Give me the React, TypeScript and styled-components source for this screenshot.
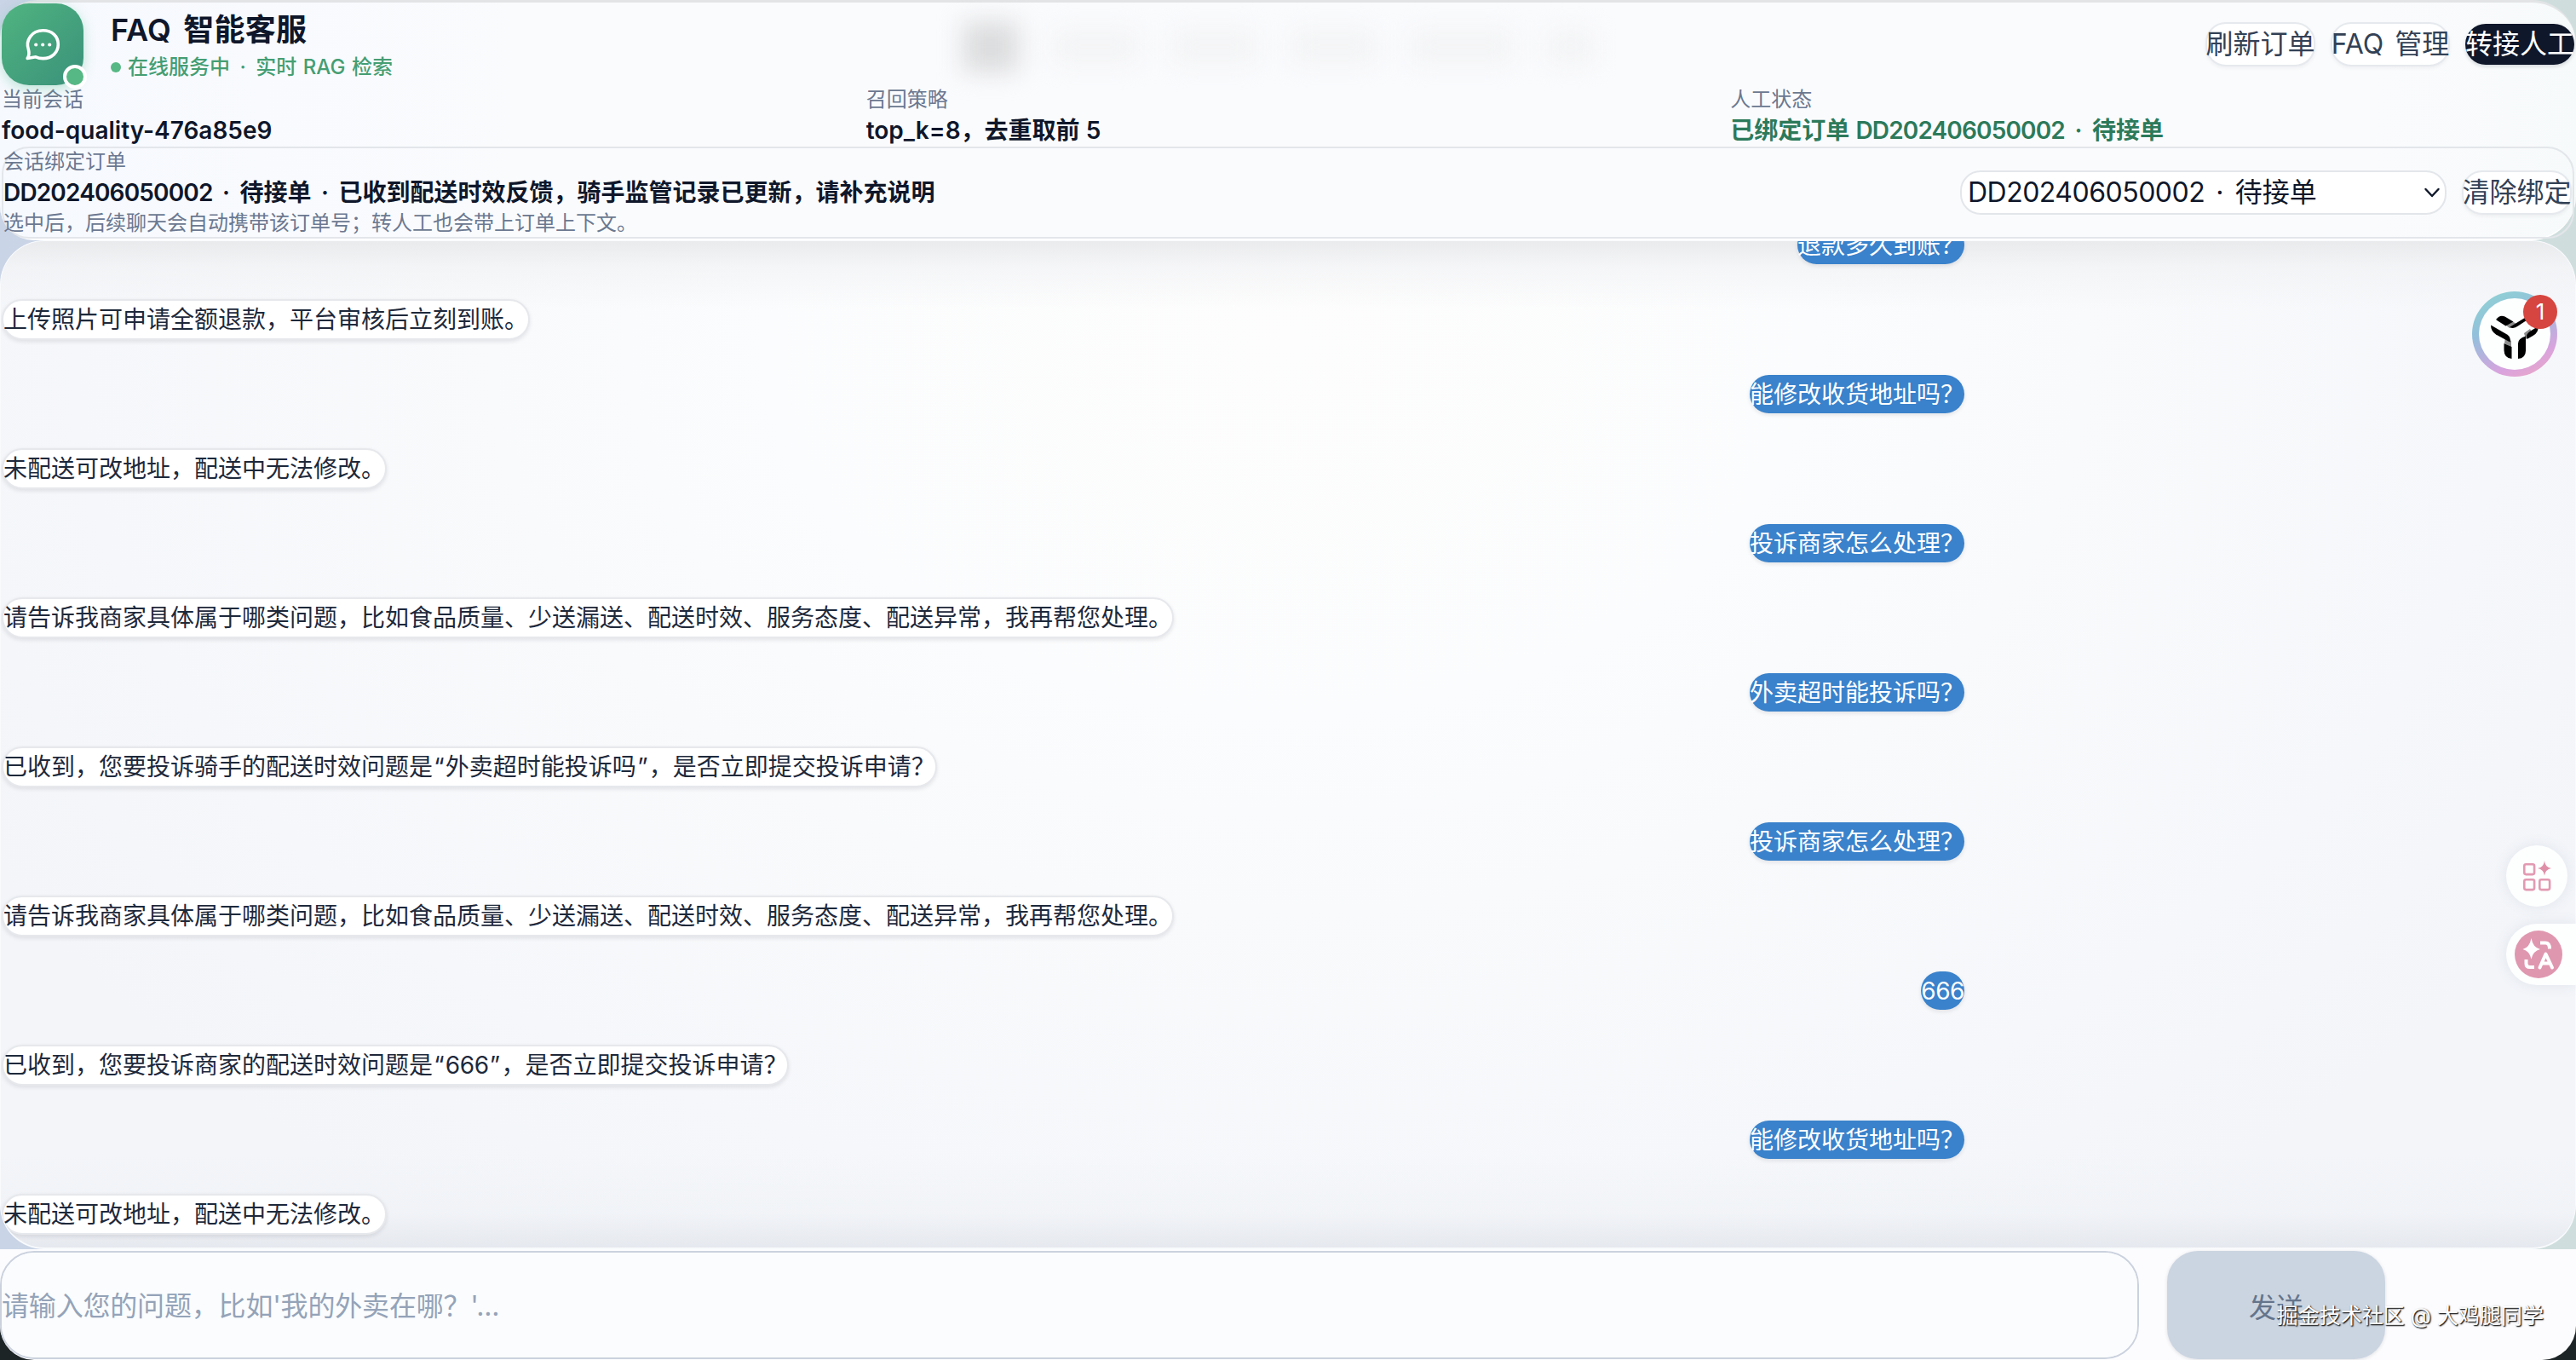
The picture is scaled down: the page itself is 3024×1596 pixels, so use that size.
import React from "react";
import styled, { createGlobalStyle } from "styled-components";

const Global = createGlobalStyle`
  * { box-sizing: border-box; }
  body { margin: 0; background: #d3dce6; overflow: hidden; font-family: Inter, "Noto Sans CJK SC", sans-serif; color: #0f172a; }
  button, select, textarea { font-family: inherit; margin: 0; }
`;

const Page = styled.div`
  position: relative;
  display: flex;
  flex-direction: column;
  width: 3024px;
  height: 1596px;
  overflow: hidden;
  background: linear-gradient(90deg, #c9d4e6 0, #d3dbe3 50%, #cfdedd 100%);
`;

const Top = styled.header`
  flex: none;
  height: 282px;
  border-top: 3px solid #e2e4e6;
  border-bottom: 2px solid #ffffff;
  padding: 0 2px;
  border-radius: 44px 52px 52px 40px;
  background: linear-gradient(90deg, #f6f9fe 0, #fafbfd 20%, #fafbfd 92%, #f7fafa 100%);
`;

const TitleBar = styled.div`
  position: relative;
  display: flex;
  align-items: center;
  height: 98px;
`;

const Logo = styled.div`
  position: relative;
  display: flex;
  align-items: center;
  justify-content: center;
  width: 96px;
  height: 96px;
  border-radius: 32px;
  color: #fff;
  background: linear-gradient(135deg, #50b480 0%, #3a917a 100%);
  box-shadow: 0 4px 14px rgba(80, 190, 140, 0.35);
`;

const OnlineDot = styled.span`
  position: absolute;
  right: -4px;
  bottom: -4px;
  width: 28px;
  height: 28px;
  border: 4px solid #fff;
  border-radius: 50%;
  background: #56b884;
`;

const Heading = styled.div`
  display: flex;
  flex-direction: column;
  margin-left: 32px;
  padding-top: 5px;
`;

const Title = styled.h1`
  margin: 0;
  font-size: 36px;
  line-height: 49px;
  font-weight: 600;
  letter-spacing: 0.2px;
  word-spacing: 5px;
`;

const Online = styled.p`
  display: flex;
  align-items: center;
  gap: 8px;
  margin: 0;
  font-size: 24px;
  line-height: 38px;
  font-weight: 500;
  word-spacing: 1.2px;
  color: #459e73;
  &::before {
    content: "";
    width: 12px;
    height: 12px;
    border-radius: 50%;
    background: #56b884;
  }
`;

const Ghosts = styled.div`
  position: absolute;
  left: 1128px;
  top: 22px;
  display: flex;
  align-items: center;
  gap: 40px;
  filter: blur(14px);
`;

const Ghost = styled.span<{ $w: number; $strong?: boolean }>`
  width: ${(p) => p.$w}px;
  height: ${(p) => (p.$strong ? 60 : 40)}px;
  background: ${(p) => (p.$strong ? "#dcddde" : "#f3f4f5")};
`;

const Actions = styled.div`
  display: flex;
  align-items: center;
  gap: 18px;
  margin-left: auto;
`;

const PillButton = styled.button<{ $dark?: boolean; $w: number }>`
  display: flex;
  align-items: center;
  justify-content: center;
  width: ${(p) => p.$w}px;
  height: ${(p) => (p.$dark ? 48 : 52)}px;
  padding: 0;
  border: ${(p) => (p.$dark ? "0" : "2px solid #e6e9ed")};
  border-radius: 24px;
  font-size: 32px;
  line-height: 48px;
  word-spacing: 4px;
  white-space: nowrap;
  color: ${(p) => (p.$dark ? "#fff" : "#334155")};
  background: ${(p) => (p.$dark ? "#0f172a" : "#fff")};
  box-shadow: 0 2px 4px rgba(15, 23, 42, ${(p) => (p.$dark ? 0.16 : 0.05)});
`;

const Stats = styled.dl`
  display: grid;
  grid-template-columns: repeat(3, 1fr);
  column-gap: 24px;
  height: 71px;
  margin: 0;
`;

const Label = styled.dt`
  margin: 0;
  font-size: 24px;
  line-height: 32px;
  color: #6b7890;
`;

const Value = styled.dd<{ $green?: boolean }>`
  margin: 0;
  font-size: 28px;
  line-height: 40px;
  font-weight: 600;
  white-space: nowrap;
  color: ${(p) => (p.$green ? "#2c7a5a" : "#0f172a")};
`;

const Binding = styled.section`
  display: flex;
  align-items: center;
  height: 108px;
  border: 2px solid #e3e6ea;
  border-radius: 32px;
  padding-right: 1px;
`;

const BindingInfo = styled.dl`
  margin: 0;
`;

const Hint = styled.p`
  margin: 0;
  font-size: 24px;
  line-height: 32px;
  color: #6b7890;
`;

const OrderSelect = styled.div`
  display: flex;
  align-items: center;
  justify-content: space-between;
  width: 571px;
  height: 52px;
  padding: 0 5px 0 7px;
  border: 2px solid #e3e6ea;
  border-radius: 24px;
  font-size: 32px;
  line-height: 48px;
  background: #fff;
`;

const Latin = styled.span`
  letter-spacing: -0.03em;
`;

const LooseLatin = styled.span`
  letter-spacing: -0.016em;
`;

const Spaced = styled.span<{ $by: number }>`
  margin: 0 ${(p) => p.$by}em;
`;

const Chat = styled.main`
  flex: none;
  display: flex;
  flex-direction: column;
  justify-content: flex-end;
  gap: 41px;
  height: 1184px;
  padding: 0 2px 15.5px;
  overflow: hidden;
  border-radius: 52px;
  border: 1px solid #f8fafc;
  border-bottom-width: 2px;
  background:
    linear-gradient(180deg, rgba(232, 233, 235, 0.9) 0, rgba(240, 241, 243, 0.6) 30px, rgba(250, 250, 251, 0) 80px),
    linear-gradient(0deg, rgba(228, 231, 237, 0.9) 0, rgba(238, 241, 245, 0.5) 40px, rgba(245, 246, 250, 0) 110px),
    radial-gradient(ellipse 1750px 1250px at 50% 10%, #fdfdfd 0, #fbfcfd 35%, #f3f5f9 100%);
`;

const Bubble = styled.div<{ $user?: boolean }>`
  flex: none;
  align-self: ${(p) => (p.$user ? "flex-end" : "flex-start")};
  margin-right: ${(p) => (p.$user ? 715 : 0)}px;
  margin-left: ${(p) => (p.$user ? 0 : -1)}px;
  height: ${(p) => (p.$user ? 45.5 : 47.5)}px;
  border: ${(p) => (p.$user ? "0" : "2px solid #e6e8ec")};
  border-radius: 24px;
  font-size: 28px;
  line-height: ${(p) => (p.$user ? 46.5 : 44.5)}px;
  white-space: nowrap;
  color: ${(p) => (p.$user ? "#fff" : "#1e293b")};
  background: ${(p) => (p.$user ? "#3a82cb" : "#fff")};
  box-shadow: 0 2px 5px rgba(15, 23, 42, 0.1);
`;

const Composer = styled.footer`
  flex: none;
  position: relative;
  display: flex;
  gap: 33px;
  height: 130px;
  padding: 2px 0 1px;
  background: #fcfcfe;
  border-radius: 0 0 40px 40px;
  box-shadow: 0 0 0 60px #1d2426;
  clip-path: inset(0);
`;

const Input = styled.textarea`
  width: 2511px;
  height: 127px;
  padding: 41px 0;
  border: 2px solid #cbd2de;
  border-radius: 40px;
  font-size: 32px;
  line-height: 44px;
  letter-spacing: -0.18px;
  resize: none;
  background: #fafcfd;
  &::placeholder { color: #94a3b8; opacity: 1; }
`;

const Send = styled.button`
  width: 256px;
  height: 127px;
  padding: 0;
  border: 0;
  border-radius: 36px;
  font-size: 32px;
  color: #64748b;
  background: #cbd5e1;
  box-shadow: 0 1px 4px rgba(15, 23, 42, 0.12);
`;

const Watermark = styled.div`
  position: absolute;
  right: 38px;
  bottom: 33px;
  font-size: 25px;
  line-height: 38px;
  color: #fff;
  text-shadow: 1px 1px 1px #222, 1px 1px 2px #333;
  white-space: nowrap;
`;

const Assistant = styled.div`
  position: absolute;
  left: 2902px;
  top: 342px;
  width: 100px;
  height: 100px;
  padding: 8px;
  border-radius: 50%;
  background: linear-gradient(155deg, #8fd0d4 8%, #93bfdc 38%, #d9a3de 75%, #f0a8c0 100%);
`;

const AssistantFace = styled.div`
  width: 84px;
  height: 84px;
  border-radius: 50%;
  background: #fdfefe;
`;

const Badge = styled.span`
  position: absolute;
  right: 0;
  top: 4px;
  width: 40px;
  height: 40px;
  border-radius: 50%;
  font-size: 26px;
  line-height: 40px;
  text-align: center;
  color: #fff;
  background: #d6453f;
`;

const ToolTab = styled.div<{ $top: number; $pill?: boolean }>`
  position: absolute;
  right: ${(p) => (p.$pill ? 0 : 10)}px;
  top: ${(p) => p.$top}px;
  display: flex;
  align-items: center;
  width: ${(p) => (p.$pill ? 82 : 72)}px;
  height: 72px;
  padding-left: ${(p) => (p.$pill ? 10 : 18)}px;
  border-radius: ${(p) => (p.$pill ? "36px 0 0 36px" : "36px")};
  background: #fdfefe;
  box-shadow: 0 0 16px rgba(100, 116, 139, 0.12);
`;

const ChatIcon = () => (
  <svg width="44" height="48" viewBox="0 0 44 48" fill="none" stroke="currentColor" strokeWidth="3.600" strokeLinejoin="round" strokeLinecap="round">
    <path d="M5.500 30.500C1.500 19 9.500 7.800 22.500 7.800C33 7.800 40.300 14.500 40.300 24C40.300 33.500 33 40.600 22.500 40.600C19 40.600 16.500 40 14 38.800L4.200 40.500Q7 36 5.500 30.500Z" />
    <path d="M14.200 24.500h.02M22.200 24.500h.02M30.200 24.500h.02" strokeWidth="4.200" />
  </svg>
);

const Chevron = () => (
  <svg width="20" height="14" viewBox="0 0 20 14" fill="none" stroke="#0f172a" strokeWidth="2.400" strokeLinecap="round" strokeLinejoin="round">
    <path d="M2.500 3l7.500 8 7.500-8" />
  </svg>
);

const TriadIcon = () => (
  <svg width="84" height="84" viewBox="0 0 84 84">
    <g fill="#8b8b8b">
      <path d="M31 31l8-4 5 3-8 5zM53 41l7-5 3 5-8 7zM31 46l7 4v7l-8-4z" />
    </g>
    <g fill="#000">
      <path d="M20.500 24.500q4-5.500 10-3l10 6-9 5-11-7z" />
      <path d="M36 34l17-10.500q4-2.500 9-1.500l-16 10.500q-5 4-10 1.500z" />
      <path d="M14 31.500l19 11q5 3 3.500 9L20 42.500q-6-4-6-11z" />
      <path d="M69.500 33q1 7-6 11l-7 4q-2-6 4-9.500z" />
      <path d="M29.500 53l9 4v14q-9-1-9-10z" />
      <path d="M46 53q0-6 9-8.500v17q0 9-9 9.500z" />
    </g>
  </svg>
);

const AppsIcon = () => (
  <svg width="36" height="38" viewBox="0 0 36 38" fill="none" stroke="#e29ab2" strokeWidth="2.600">
    <rect x="3.300" y="5.300" width="11.800" height="11.800" rx="2" />
    <rect x="3.300" y="23.300" width="11.800" height="11.800" rx="2" />
    <rect x="21.300" y="23.300" width="11.800" height="11.800" rx="2" />
    <path d="M27 1Q28 9 35 10Q28 11 27 18.500Q26 11 19 10Q26 9 27 1Z" fill="#e08fa9" stroke="none" />
  </svg>
);

const TranslateIcon = () => (
  <svg width="56" height="56" viewBox="0 0 56 56" fill="none" stroke="#fff" strokeWidth="4" strokeLinecap="round" strokeLinejoin="round">
    <circle cx="28" cy="28" r="28" fill="#df97af" stroke="none" />
    <path d="M19.500 9Q21.500 20 30 22Q21.500 24 19.500 33.500Q17.500 24 9.500 22Q17.500 20 19.500 9Z" fill="#fff" stroke="none" />
    <path d="M30 14.500h6q5 0 5 7M13.500 34v5q0 4 4.500 4h5" strokeLinecap="butt" />
    <path d="M29.500 43.500L36.500 27.500L44 43.500M32.500 38.500h8.500" />
  </svg>
);

/* Widens middle dots and curly quotes and tightens digits inside mixed Chinese/Latin lines. */
function Mixed({ children, regular }: { children: string; regular?: boolean }) {
  const Run = regular ? LooseLatin : Latin;
  return (
    <>
      {children.split(/([·“”]|DD\d+|666)/).map((part, i) => {
        if (part === "·") return <Spaced key={i} $by={regular ? 0.13 : 0.16}>{part}</Spaced>;
        if (part === "“" || part === "”") return <Spaced key={i} $by={0.045}>{part}</Spaced>;
        if (/^(DD|666)/.test(part)) return <Run key={i}>{part}</Run>;
        return part;
      })}
    </>
  );
}

const messages: { user?: boolean; text: string }[] = [
  { user: true, text: "退款多久到账？" },
  { text: "上传照片可申请全额退款，平台审核后立刻到账。" },
  { user: true, text: "能修改收货地址吗？" },
  { text: "未配送可改地址，配送中无法修改。" },
  { user: true, text: "投诉商家怎么处理？" },
  { text: "请告诉我商家具体属于哪类问题，比如食品质量、少送漏送、配送时效、服务态度、配送异常，我再帮您处理。" },
  { user: true, text: "外卖超时能投诉吗？" },
  { text: "已收到，您要投诉骑手的配送时效问题是“外卖超时能投诉吗”，是否立即提交投诉申请？" },
  { user: true, text: "投诉商家怎么处理？" },
  { text: "请告诉我商家具体属于哪类问题，比如食品质量、少送漏送、配送时效、服务态度、配送异常，我再帮您处理。" },
  { user: true, text: "666" },
  { text: "已收到，您要投诉商家的配送时效问题是“666”，是否立即提交投诉申请？" },
  { user: true, text: "能修改收货地址吗？" },
  { text: "未配送可改地址，配送中无法修改。" },
];

export default function App() {
  return (
    <Page>
      <Global />
      <Top>
        <TitleBar>
          <Ghosts>
            <Ghost $w={66} $strong />
            <Ghost $w={100} />
            <Ghost $w={100} />
            <Ghost $w={100} />
            <Ghost $w={120} />
            <Ghost $w={56} />
          </Ghosts>
          <Logo>
            <ChatIcon />
            <OnlineDot />
          </Logo>
          <Heading>
            <Title>FAQ 智能客服</Title>
            <Online>
              <span><Mixed>在线服务中 · 实时 RAG 检索</Mixed></span>
            </Online>
          </Heading>
          <Actions>
            <PillButton $w={129}>刷新订单</PillButton>
            <PillButton $w={140}>FAQ 管理</PillButton>
            <PillButton $w={128} $dark>转接人工</PillButton>
          </Actions>
        </TitleBar>
        <Stats>
          <div>
            <Label>当前会话</Label>
            <Value>food-quality-476a85e9</Value>
          </div>
          <div>
            <Label>召回策略</Label>
            <Value>top_k=8，去重取前 5</Value>
          </div>
          <div>
            <Label>人工状态</Label>
            <Value $green><Mixed>已绑定订单 DD202406050002 · 待接单</Mixed></Value>
          </div>
        </Stats>
        <Binding>
          <BindingInfo>
            <Label>会话绑定订单</Label>
            <Value><Mixed>DD202406050002 · 待接单 · 已收到配送时效反馈，骑手监管记录已更新，请补充说明</Mixed></Value>
            <Hint>选中后，后续聊天会自动携带该订单号；转人工也会带上订单上下文。</Hint>
          </BindingInfo>
          <Actions>
            <OrderSelect>
              <span><Mixed regular>DD202406050002 · 待接单</Mixed></span>
              <Chevron />
            </OrderSelect>
            <PillButton $w={129}>清除绑定</PillButton>
          </Actions>
        </Binding>
      </Top>
      <Chat>
        {messages.map((m, i) => (
          <Bubble key={i} $user={m.user}><Mixed regular>{m.text}</Mixed></Bubble>
        ))}
      </Chat>
      <Composer>
        <Input placeholder="请输入您的问题，比如'我的外卖在哪？'..." />
        <Send>发送</Send>
        <Watermark>掘金技术社区 @ 大鸡腿同学</Watermark>
      </Composer>
      <Assistant>
        <AssistantFace>
          <TriadIcon />
        </AssistantFace>
        <Badge>1</Badge>
      </Assistant>
      <ToolTab $top={992}>
        <AppsIcon />
      </ToolTab>
      <ToolTab $top={1084} $pill>
        <TranslateIcon />
      </ToolTab>
    </Page>
  );
}
